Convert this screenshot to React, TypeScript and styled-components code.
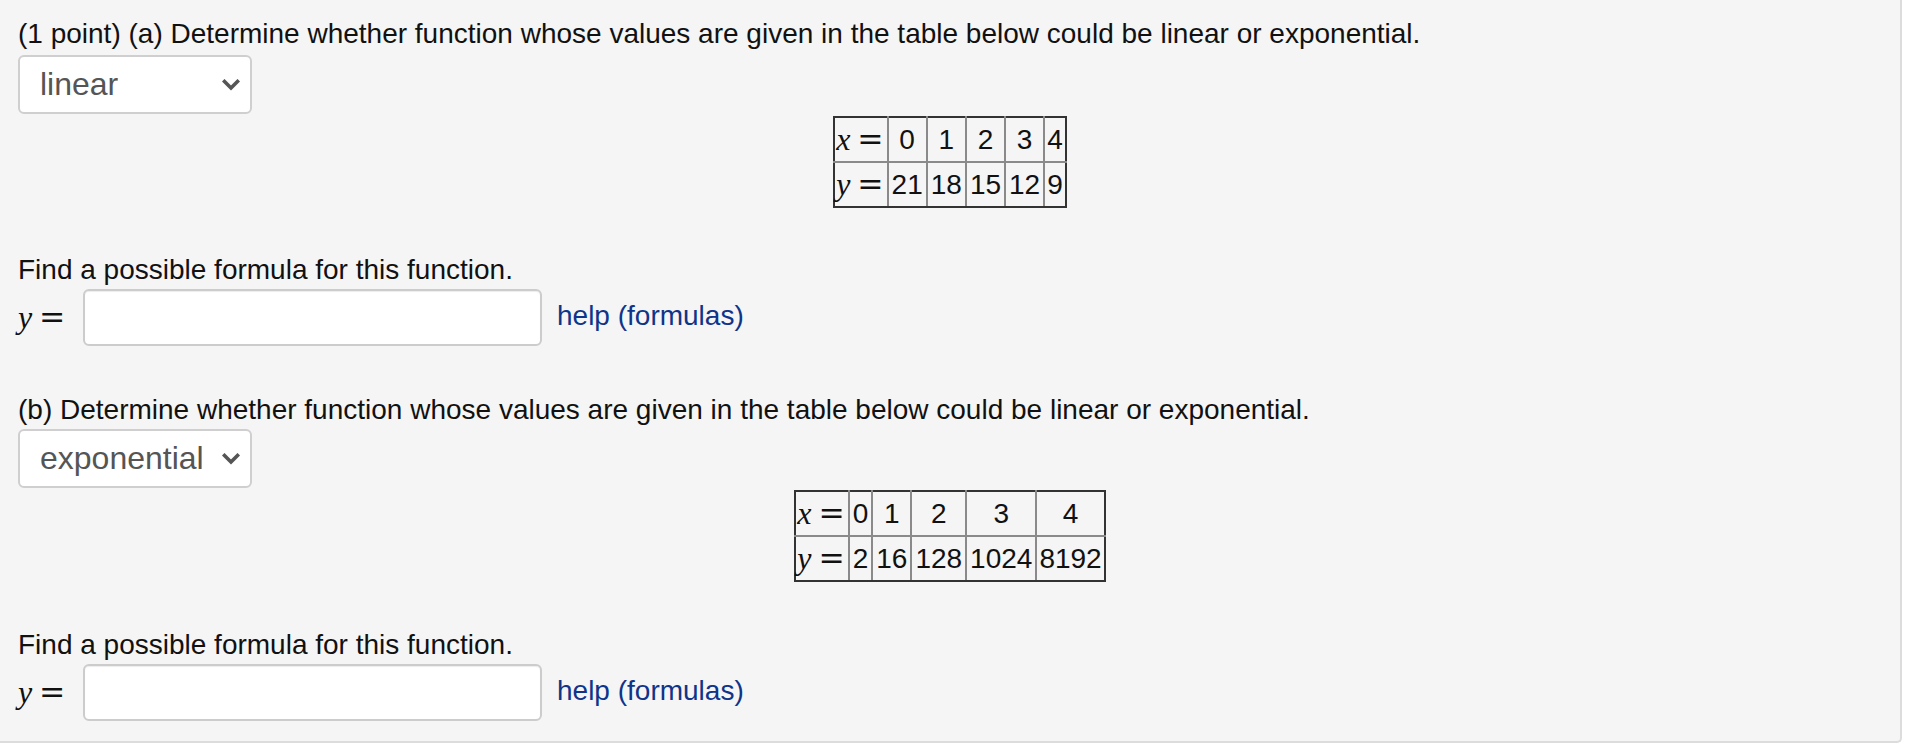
import React from 'react';
import styled, { createGlobalStyle } from 'styled-components';

const GlobalStyle = createGlobalStyle`
  html, body {
    margin: 0;
    padding: 0;
    background: #ffffff;
  }
  body {
    font-family: "Liberation Sans", Arial, Helvetica, sans-serif;
    color: #111;
  }
`;

const Panel = styled.div`
  box-sizing: border-box;
  width: 1902px;
  padding: 14px 18px 20px;
  background: #f5f5f5;
  border-right: 2px solid #dcdcdc;
  border-bottom: 2px solid #dcdcdc;
  border-bottom-right-radius: 5px;
`;

const Prompt = styled.div<{ $gap?: number }>`
  margin-top: ${(p) => p.$gap ?? 0}px;
  font-size: 28px;
  line-height: 40px;
  color: #111;
`;

const SelectBox = styled.div<{ $gap?: number }>`
  box-sizing: border-box;
  margin-top: ${(p) => p.$gap ?? 0}px;
  width: 234px;
  height: 59px;
  display: flex;
  align-items: center;
  justify-content: space-between;
  padding: 0 10px 0 20px;
  background: #fff;
  border: 2px solid #cfcfcf;
  border-radius: 6px;
  font-size: 32px;
  color: #555;
`;

const Chevron = styled.svg`
  width: 18px;
  height: 12px;
  flex: none;
`;

const ValueTable = styled.table<{ $gap?: number }>`
  margin: ${(p) => p.$gap ?? 0}px auto 0;
  border-collapse: collapse;
  border: none;
  font-size: 28px;

  tr:first-child td {
    border-top-color: #333;
  }
  tr:last-child td {
    border-bottom-color: #333;
  }
  td:first-child {
    border-left-color: #333;
  }
  td:last-child {
    border-right-color: #333;
  }
`;

const Cell = styled.td`
  border: 2px solid #8a8a8a;
  padding: 0 3px;
  height: 43px;
  line-height: 43px;
  text-align: center;
  color: #111;
  white-space: nowrap;

  &:last-child {
    padding: 0 2px;
  }
`;

const MathCell = styled(Cell)`
  padding: 0 3px 0 1px;
  font-family: "Liberation Serif", "Times New Roman", serif;
  font-size: 32px;
  text-align: left;
`;

const Var = styled.i`
  font-family: "Liberation Serif", "Times New Roman", serif;
`;

const Eq = styled.span`
  margin-left: 0.22em;
  font-family: "DejaVu Serif", "Liberation Serif", serif;
  font-size: 0.98em;
`;

const AnswerRow = styled.div<{ $gap?: number }>`
  margin-top: ${(p) => p.$gap ?? 0}px;
  display: flex;
  align-items: center;
  height: 57px;
`;

const Label = styled.span`
  width: 65px;
  font-family: "Liberation Serif", "Times New Roman", serif;
  font-size: 32px;
  color: #111;
`;

const AnswerInput = styled.input`
  box-sizing: border-box;
  width: 459px;
  height: 57px;
  margin: 0;
  padding: 4px 12px;
  background: #fff;
  border: 2px solid #cccccc;
  border-radius: 6px;
  box-shadow: inset 0 1px 1px rgba(0, 0, 0, 0.075);
  font-family: "Liberation Sans", Arial, sans-serif;
  font-size: 28px;
  outline: none;
`;

const HelpLink = styled.a`
  margin-left: 15px;
  margin-top: -3px;
  font-size: 28px;
  color: #0f3489;
  text-decoration: none;
`;

const ChevronIcon = () => (
  <Chevron viewBox="0 0 18 12">
    <polyline points="2.5,2.5 9,9 15.5,2.5" fill="none" stroke="#555" strokeWidth="3.6" strokeLinecap="square" />
  </Chevron>
);

interface TableProps {
  xs: string[];
  ys: string[];
  gap?: number;
}

const Values: React.FC<TableProps> = ({ xs, ys, gap }) => (
  <ValueTable $gap={gap}>
    <tbody>
      <tr>
        <MathCell>
          <Var>x</Var>
          <Eq>=</Eq>
        </MathCell>
        {xs.map((v, i) => (
          <Cell key={i}>{v}</Cell>
        ))}
      </tr>
      <tr>
        <MathCell>
          <Var>y</Var>
          <Eq>=</Eq>
        </MathCell>
        {ys.map((v, i) => (
          <Cell key={i}>{v}</Cell>
        ))}
      </tr>
    </tbody>
  </ValueTable>
);

const Answer: React.FC<{ gap?: number }> = ({ gap }) => (
  <AnswerRow $gap={gap}>
    <Label>
      <Var>y</Var>
      <Eq>=</Eq>
    </Label>
    <AnswerInput type="text" />
    <HelpLink href="#">help (formulas)</HelpLink>
  </AnswerRow>
);

export default function App() {
  return (
    <>
      <GlobalStyle />
      <Panel>
        <Prompt>
          (1 point) (a) Determine whether function whose values are given in the table below could be linear or
          exponential.
        </Prompt>
        <SelectBox $gap={1}>
          <span>linear</span>
          <ChevronIcon />
        </SelectBox>
        <Values gap={2} xs={['0', '1', '2', '3', '4']} ys={['21', '18', '15', '12', '9']} />
        <Prompt $gap={42}>Find a possible formula for this function.</Prompt>
        <Answer gap={-1} />

        <Prompt $gap={44}>
          (b) Determine whether function whose values are given in the table below could be linear or exponential.
        </Prompt>
        <SelectBox $gap={-1}>
          <span>exponential</span>
          <ChevronIcon />
        </SelectBox>
        <Values gap={2} xs={['0', '1', '2', '3', '4']} ys={['2', '16', '128', '1024', '8192']} />
        <Prompt $gap={43}>Find a possible formula for this function.</Prompt>
        <Answer gap={-1} />
      </Panel>
    </>
  );
}
